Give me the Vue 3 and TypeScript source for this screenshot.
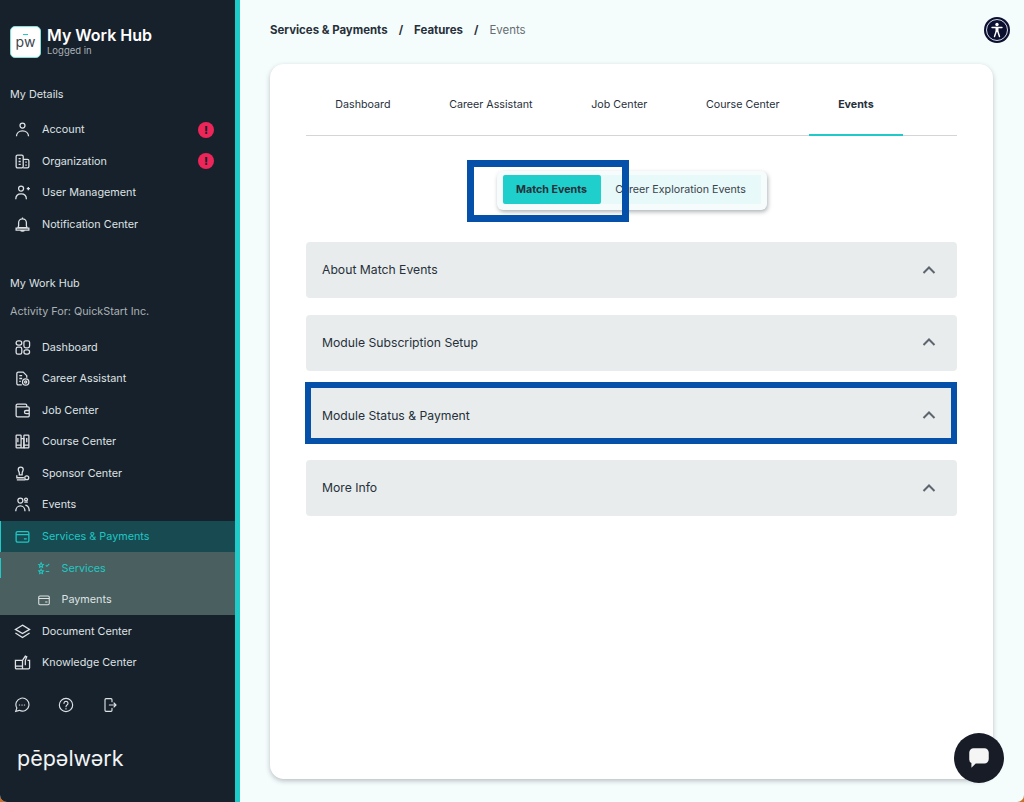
<script setup lang="ts">
interface NavItem {
  label: string
  icon: string
  alert?: boolean
  active?: boolean
}

const icons: Record<string, string> = {
  account: '<circle cx="12" cy="6.5" r="3.5"/><path d="M3.5 21.5c0-4.500 3.500-7.500 8.500-7.500s8.500 3 8.500 7.500"/>',
  organization: '<rect x="3" y="3" width="10" height="18" rx="2"/><path d="M13 9h6a2 2 0 0 1 2 2v8a2 2 0 0 1-2 2h-6M6.500 8h3M6.500 12h3M6.500 16h3M16 13h2M16 17h2"/>',
  users: '<circle cx="10" cy="6.500" r="3.500"/><path d="M2.500 21.500c0-4.500 3-7.500 7.500-7.500s7.500 3 7.500 7.500M18 6.500h4.500M20.200 4.200v4.600"/>',
  bell: '<path d="M5.500 16.500h13L17.500 14V9.500a5.500 5.500 0 0 0-11 0V14zM3 17v3h18v-3zM12 2v2M9.500 20c0 2 5 2 5 0"/>',
  dashboard: '<rect x="3" y="2.500" width="8" height="6" rx="3"/><rect x="14" y="2.500" width="8" height="10" rx="2.500"/><rect x="3" y="11.500" width="8" height="10" rx="2.500"/><rect x="14" y="15.500" width="8" height="6" rx="3"/>',
  career: '<path d="M11 21H6a2 2 0 0 1-2-2V5a2 2 0 0 1 2-2h7l5 5v3M7.500 8h4M7.500 12h4M7.500 16h2"/><circle cx="16.500" cy="17" r="4.500"/><circle cx="16.500" cy="17" r="1.500"/>',
  job: '<path d="M18 7V5a2 2 0 0 0-2-2H5a2 2 0 0 0-2 2v14a2 2 0 0 0 2 2h15a1.500 1.500 0 0 0 1.500-1.500V8.500A1.500 1.500 0 0 0 20 7H3"/><path d="M21.500 12H17a2 2 0 0 0 0 4.500h4.500"/>',
  course: '<rect x="3" y="3" width="7" height="18" rx="1"/><rect x="14" y="3" width="7" height="18" rx="1"/><path d="M10 8h4v13h-4M3 17h7M14 17h7M5.500 7v6M18 7v6"/>',
  sponsor: '<path d="M9.500 3a3.500 3.500 0 0 1 3.500 3.500c0 2-1.500 3-1.500 5V14h-4v-2.500c0-2-1.500-3-1.500-5A3.500 3.500 0 0 1 9.500 3zM4 14.500V18h10M4 21h12"/><circle cx="18" cy="18" r="2.800"/>',
  events: '<circle cx="9" cy="6.500" r="3.500"/><path d="M2.500 21.500c0-4.500 3-7.500 6.500-7.500s6.500 3 6.500 7.500M14.500 8.500h5M16 13c3 .5 5.500 3.500 5.500 8.500"/><circle cx="17" cy="5" r="2"/>',
  card: '<rect x="3" y="5" width="18" height="15" rx="2"/><path d="M3 9.500h18M14 15.500h4"/>',
  checklist: '<path d="M7 3l1.200 2.500 2.800.4-2 2 .5 2.700L7 9.300l-2.500 1.300.5-2.700-2-2 2.800-.4zM7 14l1.200 2.500 2.800.4-2 2 .5 2.700L7 20.300l-2.500 1.300.5-2.700-2-2 2.800-.4zM15 7l2 2 4-4M15 18h6"/>',
  layers: '<path d="M12 3l10 6-10 6L2 9zM2 14l10 6.500L22 14"/>',
  knowledge: '<path d="M2 9h10v12H3.500A1.500 1.500 0 0 1 2 19.500zM12 21h8.500a1.500 1.500 0 0 0 1.500-1.500V9h-3M12 9l4-6 2 1-2 5v7M2 17h10"/>',
}

const details: NavItem[] = [
  { label: 'Account', icon: 'account', alert: true },
  { label: 'Organization', icon: 'organization', alert: true },
  { label: 'User Management', icon: 'users' },
  { label: 'Notification Center', icon: 'bell' },
]

const hubTop: NavItem[] = [
  { label: 'Dashboard', icon: 'dashboard' },
  { label: 'Career Assistant', icon: 'career' },
  { label: 'Job Center', icon: 'job' },
  { label: 'Course Center', icon: 'course' },
  { label: 'Sponsor Center', icon: 'sponsor' },
  { label: 'Events', icon: 'events' },
]

const subItems: NavItem[] = [
  { label: 'Services', icon: 'checklist', active: true },
  { label: 'Payments', icon: 'card' },
]

const hubBottom: NavItem[] = [
  { label: 'Document Center', icon: 'layers' },
  { label: 'Knowledge Center', icon: 'knowledge' },
]

const tabs = ['Dashboard', 'Career Assistant', 'Job Center', 'Course Center', 'Events']
const sections = ['About Match Events', 'Module Subscription Setup', 'Module Status & Payment', 'More Info']
</script>

<template>
  <div class="page">
    <aside class="sidebar">
      <div class="brand">
        <div class="brand-logo"><span class="brand-mark">pw</span></div>
        <div>
          <div class="brand-title">My Work Hub</div>
          <div class="brand-sub">Logged in</div>
        </div>
      </div>

      <div class="side-heading details-heading">My Details</div>
      <nav class="nav">
        <div v-for="item in details" :key="item.label" class="nav-row">
          <svg class="nav-icon" viewBox="0 0 24 24" v-html="icons[item.icon]"></svg>
          <span>{{ item.label }}</span>
          <span v-if="item.alert" class="alert">!</span>
        </div>
      </nav>

      <div class="side-heading hub-heading">My Work Hub</div>
      <div class="activity">Activity For: QuickStart Inc.</div>
      <nav class="nav hub-nav">
        <div v-for="item in hubTop" :key="item.label" class="nav-row">
          <svg class="nav-icon" viewBox="0 0 24 24" v-html="icons[item.icon]"></svg>
          <span>{{ item.label }}</span>
        </div>
        <div class="nav-row current">
          <svg class="nav-icon" viewBox="0 0 24 24" v-html="icons.card"></svg>
          <span>Services &amp; Payments</span>
        </div>
        <div class="sub-nav">
          <div v-for="item in subItems" :key="item.label" class="nav-row sub-row" :class="{ 'sub-active': item.active }">
            <svg class="nav-icon small" viewBox="0 0 24 24" v-html="icons[item.icon]"></svg>
            <span>{{ item.label }}</span>
          </div>
        </div>
        <div v-for="item in hubBottom" :key="item.label" class="nav-row">
          <svg class="nav-icon" viewBox="0 0 24 24" v-html="icons[item.icon]"></svg>
          <span>{{ item.label }}</span>
        </div>
      </nav>

      <div class="side-tools">
        <svg viewBox="0 0 24 24"><path d="M2.500 21.500l1.800-5A9.800 9.800 0 1 1 8 20z"/><path d="M8 12h.5M11.800 12h.5M15.500 12h.5"/></svg>
        <svg viewBox="0 0 24 24"><circle cx="12" cy="12" r="10"/><path d="M9 9.500a3 3 0 1 1 4.500 2.600c-1 .6-1.500 1.200-1.500 2.400M12 17.500v.5"/></svg>
        <svg viewBox="0 0 24 24"><path d="M15 7V4a1.500 1.500 0 0 0-1.500-1.500H6A1.500 1.500 0 0 0 4.500 4v16A1.500 1.500 0 0 0 6 21.500h7.500A1.500 1.500 0 0 0 15 20v-3M11 12h10M18 9l3 3-3 3"/></svg>
      </div>

      <div class="wordmark">pēpəlwərk</div>
    </aside>

    <main class="content">
      <div class="topbar">
        <div class="crumbs">
          <b>Services &amp; Payments</b>
          <b class="slash">/</b>
          <b>Features</b>
          <b class="slash">/</b>
          <span>Events</span>
        </div>
        <svg class="a11y" viewBox="0 0 26 26">
          <circle cx="13" cy="13" r="13" fill="#0b1030" />
          <circle cx="13" cy="13" r="10.500" fill="none" stroke="#d5d9e4" stroke-width="1" />
          <circle cx="13" cy="7.500" r="1.700" fill="#fff" />
          <path d="M8 10.500h10" stroke="#fff" stroke-width="1.400" stroke-linecap="round" />
          <path d="M13 10.500v4.500" stroke="#fff" stroke-width="3" />
          <path d="M12 15l-1.500 4.500M14 15l1.500 4.500" stroke="#fff" stroke-width="1.400" stroke-linecap="round" />
        </svg>
      </div>

      <section class="card">
        <div class="tabs">
          <div v-for="tab in tabs" :key="tab" class="tab" :class="{ selected: tab === 'Events' }">{{ tab }}</div>
        </div>

        <div class="toggle-wrap">
          <div class="toggle">
            <div class="toggle-on">Match Events</div>
            <div class="toggle-off">Career Exploration Events</div>
          </div>
          <div class="mark mark-toggle"></div>
        </div>

        <div class="accordion">
          <div v-for="section in sections" :key="section" class="acc-row">
            <span>{{ section }}</span>
            <svg class="chevron" viewBox="0 0 14 8"><path d="M1.500 7L7 1.500 12.500 7" /></svg>
            <div v-if="section === 'Module Status & Payment'" class="mark mark-row"></div>
          </div>
        </div>
      </section>
    </main>

    <button class="chat" type="button" aria-label="Chat">
      <svg viewBox="0 0 24 24"><path d="M7 3h10a4 4 0 0 1 4 4v6a4 4 0 0 1-4 4H9l-4 4v-4.300A4 4 0 0 1 3 13V7a4 4 0 0 1 4-4z" /></svg>
    </button>
  </div>
</template>

<style scoped>
.page {
  position: relative;
  display: flex;
  width: 1024px;
  height: 802px;
  overflow: hidden;
  border-radius: 0 0 7px 7px;
  background: #f5fcfc;
  font-family: Inter, "Liberation Sans", sans-serif;
  color: #27303a;
}

/* Sidebar */
.sidebar {
  flex: none;
  box-sizing: border-box;
  width: 240px;
  height: 802px;
  padding-top: 26px;
  background: #17212b;
  border-right: 5px solid #1fcbc8;
  color: #dfe2e4;
  font-size: 10.8px;
}

.brand {
  display: flex;
  align-items: flex-start;
  gap: 6px;
  height: 32px;
  padding-left: 10px;
}

.brand-logo {
  display: flex;
  align-items: center;
  justify-content: center;
  box-sizing: border-box;
  width: 31px;
  height: 32px;
  border-radius: 5px;
  background: #fff;
  border: 1px solid #7fe0dc;
}

.brand-mark {
  position: relative;
  color: #3c4650;
  font-size: 14px;
  line-height: 1;
}

.brand-mark::before {
  content: "";
  position: absolute;
  left: 7px;
  top: -1px;
  width: 5px;
  height: 1px;
  background: #1fcbc8;
}

.brand-title {
  color: #fff;
  font-size: 16px;
  font-weight: 600;
  line-height: 19px;
}

.brand-sub {
  color: #aab1b6;
  font-size: 9.5px;
  line-height: 12px;
}

.side-heading {
  padding-left: 10px;
  line-height: 16px;
}

.details-heading {
  margin-top: 28.5px;
}

.hub-heading {
  margin-top: 35.5px;
}

.activity {
  margin-top: 12px;
  padding-left: 10px;
  line-height: 16px;
  color: #aab1b6;
}

.nav {
  margin-top: 11.5px;
}

.hub-nav {
  margin-top: 11.8px;
}

.nav-row {
  display: flex;
  align-items: center;
  box-sizing: border-box;
  height: 31.55px;
  padding-left: 14px;
}

.nav-icon {
  flex: none;
  width: 17px;
  height: 17px;
  margin-right: 11px;
  fill: none;
  stroke: #dfe2e4;
  stroke-width: 1.8;
}

.nav-icon.small {
  width: 14px;
  height: 14px;
  margin-right: 10.5px;
}

.alert {
  display: flex;
  align-items: center;
  justify-content: center;
  width: 16px;
  height: 16px;
  margin-left: auto;
  margin-right: 21px;
  border-radius: 50%;
  background: #ee2558;
  color: #17212b;
  font-size: 11px;
  font-weight: 800;
}

.current {
  padding-left: 13px;
  background: #184a52;
  border-left: 1px solid #1fcbc8;
  color: #1fc7c3;
}

.current .nav-icon,
.sub-active .nav-icon {
  stroke: #1fc7c3;
}

.sub-nav {
  background: #4a5f5f;
}

.sub-row {
  padding-left: 37px;
}

.sub-active {
  position: relative;
  color: #1fc7c3;
}

.sub-active::before {
  content: "";
  position: absolute;
  left: 0;
  top: 6px;
  width: 1px;
  height: 20px;
  background: #1fcbc8;
}

.side-tools {
  display: flex;
  gap: 28px;
  margin-top: 18.7px;
  padding-left: 14px;
}

.side-tools svg {
  width: 16px;
  height: 16px;
  fill: none;
  stroke: #dfe2e4;
  stroke-width: 1.7;
  stroke-linecap: round;
}

.wordmark {
  margin-top: 29px;
  padding-left: 17px;
  color: #f2f4f5;
  font-size: 21.5px;
  font-weight: 400;
  line-height: 32px;
}

/* Main */
.content {
  flex: 1;
  box-sizing: border-box;
  padding: 17px 31px 0 30px;
  min-width: 0;
}

.topbar {
  display: flex;
  align-items: center;
  justify-content: space-between;
  height: 26px;
  margin-right: -17px;
}

.crumbs {
  display: flex;
  gap: 11px;
  font-size: 11.45px;
  color: #666d73;
}

.crumbs b {
  color: #27303a;
  font-weight: 700;
}

.a11y {
  width: 26px;
  height: 26px;
}

.card {
  box-sizing: border-box;
  height: 715px;
  margin-top: 21px;
  padding: 16px 36px 0;
  background: #fff;
  border-radius: 14px;
  box-shadow: 0 2px 5px rgba(30, 40, 50, 0.28);
}

.tabs {
  display: flex;
  height: 55px;
  border-bottom: 1px solid #d3d6d8;
}

.tab {
  display: flex;
  align-items: center;
  justify-content: center;
  height: 48px;
  padding: 0 29.35px 7px;
  font-size: 10.7px;
  color: #27303a;
}

.tab.selected {
  height: 48px;
  padding-bottom: 6px;
  font-weight: 700;
  border-bottom: 2px solid #1fcbc8;
}

.toggle-wrap {
  position: relative;
  display: flex;
  justify-content: center;
  margin-top: 35px;
}

.toggle {
  display: flex;
  box-sizing: border-box;
  width: 270px;
  height: 39px;
  padding: 4px 6px 6px;
  border-radius: 6px;
  background: #f6fcfc;
  box-shadow: 1px 2px 4px rgba(30, 40, 50, 0.35);
  font-size: 10.7px;
}

.toggle-on {
  display: flex;
  align-items: center;
  justify-content: center;
  width: 98px;
  border-radius: 2px;
  background: #1fcfcb;
  font-weight: 700;
}

.toggle-off {
  display: flex;
  align-items: center;
  justify-content: center;
  flex: 1;
  background: #e8f9f9;
  color: #3a434c;
}

.mark {
  position: absolute;
  box-sizing: border-box;
  border-style: solid;
  border-color: #0550a8;
  pointer-events: none;
}

.mark-toggle {
  left: 161px;
  top: -11px;
  width: 162px;
  height: 62px;
  border-width: 7px;
}

.accordion {
  display: flex;
  flex-direction: column;
  gap: 16.3px;
  margin-top: 32px;
}

.acc-row {
  position: relative;
  display: flex;
  align-items: center;
  justify-content: space-between;
  box-sizing: border-box;
  height: 56.4px;
  padding: 0 21px 1px 16px;
  border-radius: 4px;
  background: #e8ecec;
  font-size: 12.2px;
  color: #27303a;
}

.chevron {
  width: 14px;
  height: 8px;
  fill: none;
  stroke: #5d6670;
  stroke-width: 2;
}

.mark-row {
  left: -1px;
  top: -5px;
  width: 652px;
  height: 62px;
  border-width: 6px;
}

.chat {
  position: absolute;
  left: 954px;
  top: 733px;
  display: flex;
  align-items: center;
  justify-content: center;
  width: 50px;
  height: 50px;
  padding: 0;
  border: 0;
  border-radius: 50%;
  background: #171c26;
}

.chat svg {
  width: 26px;
  height: 26px;
  fill: #f5f5f5;
}
</style>

<style>
html,
body {
  margin: 0;
  background: #c8702c;
}
</style>
